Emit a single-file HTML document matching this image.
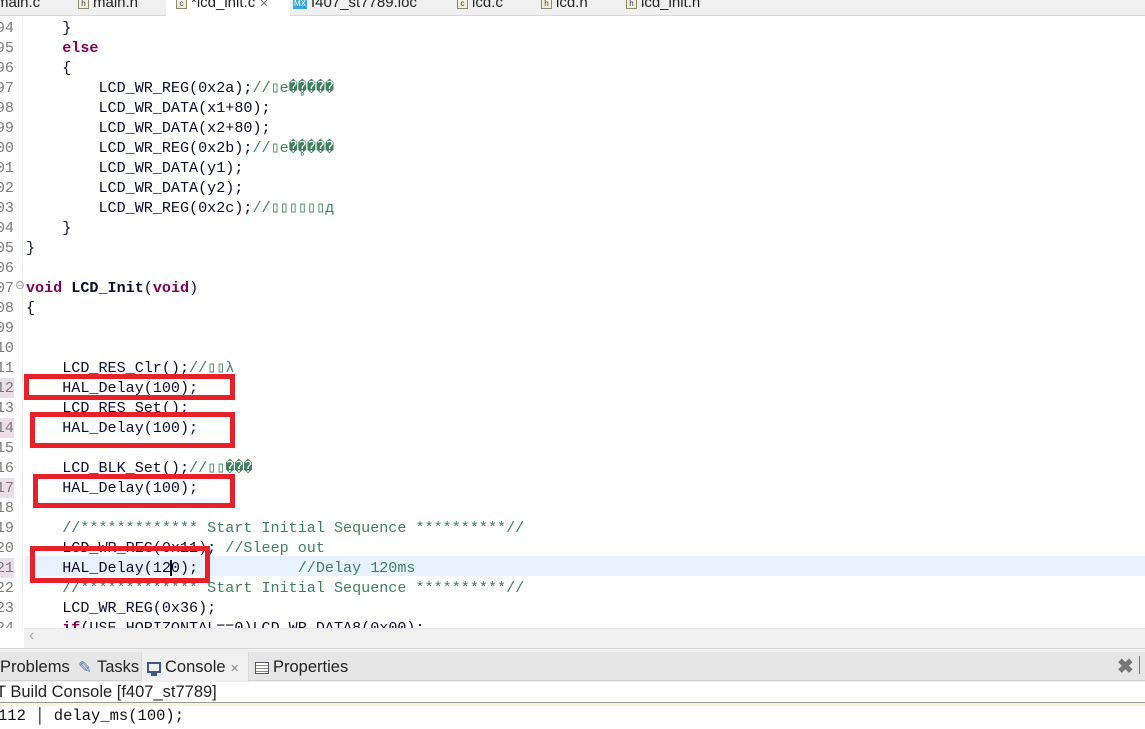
<!DOCTYPE html>
<html><head><meta charset="utf-8"><style>
*{margin:0;padding:0;box-sizing:border-box}
body{width:1145px;height:729px;overflow:hidden;background:#fff;position:relative;font-family:"Liberation Sans","Noto Sans CJK SC",sans-serif}
.tabs{position:absolute;left:0;top:0;width:1145px;height:16px;background:#f0f0f0;border-bottom:1px solid #d8d8d8;font-size:15px;color:#222}
.tab{position:absolute;top:-6px;white-space:nowrap}
.ico{display:inline-block;width:11px;height:11px;border:1px solid #8a8a6a;background:#f4f0dc;vertical-align:middle;margin-right:4px;font-size:8px;line-height:9px;text-align:center;color:#335}
.code{position:absolute;left:0;top:18px;width:1145px;height:610px;overflow:hidden}
.row{position:absolute;left:0;height:20px;width:1145px;line-height:20px;font-family:"Liberation Mono","Noto Sans CJK SC",monospace;font-size:15.1px;white-space:pre;color:#0a0a30}
.num{position:absolute;right:1131px;width:40px;text-align:right;color:#7a7a7a}
.txt{position:absolute;left:26px}
.k{color:#7f0055;font-weight:bold}
.c{color:#3f7f5f}
.box{position:absolute;border:5px solid #e8202a}
.pt{position:absolute;top:658px;font-size:16.5px;color:#222;white-space:nowrap}
</style></head><body>
<div class="tabs">
<span class="tab" style="left:-4px">main.c</span>
<span class="tab" style="left:78px"><span class="ico">h</span>main.h</span>
<span class="tab" style="left:166px;background:#fff;width:124px;height:23px"></span>
<span class="tab" style="left:176px"><span class="ico">c</span>*lcd_init.c <span style="font-size:11px;color:#777">✕</span></span>
<span class="tab" style="left:293px"><span class="ico" style="background:#3aa8e0;border-color:#3aa8e0;color:#fff;width:14px">MX</span>f407_st7789.ioc</span>
<span class="tab" style="left:457px"><span class="ico">c</span>lcd.c</span>
<span class="tab" style="left:541px"><span class="ico">h</span>lcd.h</span>
<span class="tab" style="left:626px"><span class="ico">h</span>lcd_init.h</span>
</div>
<div class="code">
<div style="position:absolute;left:0;top:0;width:23px;height:612px;border-right:1px solid #eee"></div>
<div style="position:absolute;left:0;top:360px;width:14px;height:20px;background:#ecdde8"></div>
<div style="position:absolute;left:0;top:400px;width:14px;height:20px;background:#ecdde8"></div>
<div style="position:absolute;left:0;top:460px;width:14px;height:20px;background:#ecdde8"></div>
<div style="position:absolute;left:0;top:540px;width:14px;height:20px;background:#ecdde8"></div>
<div style="position:absolute;left:25px;top:538px;width:1120px;height:20px;background:#e8f2fe"></div>
<div class="row" style="top:0"><span class="num">94</span><span class="txt">    }</span></div>
<div class="row" style="top:20px"><span class="num">95</span><span class="txt">    <span class="k">else</span></span></div>
<div class="row" style="top:40px"><span class="num">96</span><span class="txt">    {</span></div>
<div class="row" style="top:60px"><span class="num">97</span><span class="txt">        LCD_WR_REG(0x2a);<span class="c">//▯e�̥����</span></span></div>
<div class="row" style="top:80px"><span class="num">98</span><span class="txt">        LCD_WR_DATA(x1+80);</span></div>
<div class="row" style="top:100px"><span class="num">99</span><span class="txt">        LCD_WR_DATA(x2+80);</span></div>
<div class="row" style="top:120px"><span class="num">00</span><span class="txt">        LCD_WR_REG(0x2b);<span class="c">//▯e�̥����</span></span></div>
<div class="row" style="top:140px"><span class="num">01</span><span class="txt">        LCD_WR_DATA(y1);</span></div>
<div class="row" style="top:160px"><span class="num">02</span><span class="txt">        LCD_WR_DATA(y2);</span></div>
<div class="row" style="top:180px"><span class="num">03</span><span class="txt">        LCD_WR_REG(0x2c);<span class="c">//▯▯▯▯▯▯д</span></span></div>
<div class="row" style="top:200px"><span class="num">04</span><span class="txt">    }</span></div>
<div class="row" style="top:220px"><span class="num">05</span><span class="txt">}</span></div>
<div class="row" style="top:240px"><span class="num">06</span></div>
<div class="row" style="top:260px"><span class="num">07</span><span style="position:absolute;left:15px;top:0;font-size:10px;color:#777">⊖</span><span class="txt"><span class="k">void</span> <b>LCD_Init</b>(<span class="k">void</span>)</span></div>
<div class="row" style="top:280px"><span class="num">08</span><span class="txt">{</span></div>
<div class="row" style="top:300px"><span class="num">09</span></div>
<div class="row" style="top:320px"><span class="num">10</span></div>
<div class="row" style="top:340px"><span class="num">11</span><span class="txt">    LCD_RES_Clr();<span class="c">//▯▯λ</span></span></div>
<div class="row" style="top:360px"><span class="num">12</span><span class="txt">    HAL_Delay(100);</span></div>
<div class="row" style="top:380px"><span class="num">13</span><span class="txt">    LCD_RES_Set();</span></div>
<div class="row" style="top:400px"><span class="num">14</span><span class="txt">    HAL_Delay(100);</span></div>
<div class="row" style="top:420px"><span class="num">15</span></div>
<div class="row" style="top:440px"><span class="num">16</span><span class="txt">    LCD_BLK_Set();<span class="c">//▯▯���</span></span></div>
<div class="row" style="top:460px"><span class="num">17</span><span class="txt">    HAL_Delay(100);</span></div>
<div class="row" style="top:480px"><span class="num">18</span></div>
<div class="row" style="top:500px"><span class="num">19</span><span class="txt">    <span class="c">//************* Start Initial Sequence **********//</span></span></div>
<div class="row" style="top:520px"><span class="num">20</span><span class="txt">    LCD_WR_REG(0x11); <span class="c">//Sleep out</span></span></div>
<div class="row" style="top:540px"><span class="num">21</span><span class="txt">    HAL_Delay(120);           <span class="c">//Delay 120ms</span></span></div>
<div class="row" style="top:560px"><span class="num">22</span><span class="txt">    <span class="c">//************* Start Initial Sequence **********//</span></span></div>
<div class="row" style="top:580px"><span class="num">23</span><span class="txt">    LCD_WR_REG(0x36);</span></div>
<div class="row" style="top:600px"><span class="num">24</span><span class="txt">    <span class="k">if</span>(USE_HORIZONTAL==0)LCD_WR_DATA8(0x00);</span></div>
<div style="position:absolute;left:170px;top:542px;width:2px;height:16px;background:#000"></div>
</div>
<div class="box" style="left:24px;top:374px;width:211px;height:26px"></div>
<div class="box" style="left:30px;top:412px;width:205px;height:36px"></div>
<div class="box" style="left:33px;top:474px;width:202px;height:34px"></div>
<div class="box" style="left:30px;top:546px;width:180px;height:37px"></div>
<div style="position:absolute;left:0;top:628px;width:1145px;height:20px;background:#f0f0f0;border-top:1px solid #e6e6e6"></div>
<div style="position:absolute;left:0;top:628px;width:24px;height:20px;background:#fff"></div>
<div style="position:absolute;left:29px;top:627px;font-size:16px;color:#aaa">‹</div>
<div style="position:absolute;left:0;top:648px;width:1145px;height:34px;background:#f0f0f0;border-top:1px solid #d4d4d4"></div>
<div style="position:absolute;left:0;top:652px;width:1145px;height:29px;background:#e6e6e6;border-bottom:1px solid #d0d0d0"></div>
<div style="position:absolute;left:141px;top:652px;width:108px;height:30px;background:#f0f0f0;border-left:1px solid #d8d8d8;border-right:1px solid #d8d8d8"></div>
<div class="pt" style="left:0">Problems</div>
<div class="pt" style="left:78px;color:#4a7ab0">✎</div>
<div class="pt" style="left:97px">Tasks</div>
<div style="position:absolute;left:147px;top:662px;width:14px;height:11px;border:2px solid #3a5a8a"></div>
<div style="position:absolute;left:151px;top:673px;width:6px;height:3px;background:#3a5a8a"></div>
<div class="pt" style="left:165px">Console</div>
<div class="pt" style="left:230px;font-size:11px;color:#888;top:662px">✕</div>
<div style="position:absolute;left:255px;top:662px;width:14px;height:12px;border:1px solid #556;background:repeating-linear-gradient(#fff 0 2px,#889 2px 3px)"></div>
<div class="pt" style="left:273px">Properties</div>
<div style="position:absolute;left:1117px;top:654px;font-size:20px;color:#777;font-weight:bold">✖</div>
<div style="position:absolute;left:1139px;top:656px;width:1px;height:18px;background:#777"></div>
<div style="position:absolute;left:-4px;top:683px;font-size:16.5px;color:#222;white-space:nowrap">T Build Console [f407_st7789]</div>
<div style="position:absolute;left:0;top:702px;width:1145px;height:1px;background:#999"></div>
<div style="position:absolute;left:0;top:703px;width:1145px;height:3px;background:#fdf3dc"></div>
<div style="position:absolute;left:0;top:706px;width:1145px;height:23px;background:#fff"></div>
<div style="position:absolute;left:-2px;top:707px;font-family:'Liberation Mono',monospace;font-size:15.5px;white-space:pre;color:#111">112 │ delay_ms(100);</div>
</body></html>
